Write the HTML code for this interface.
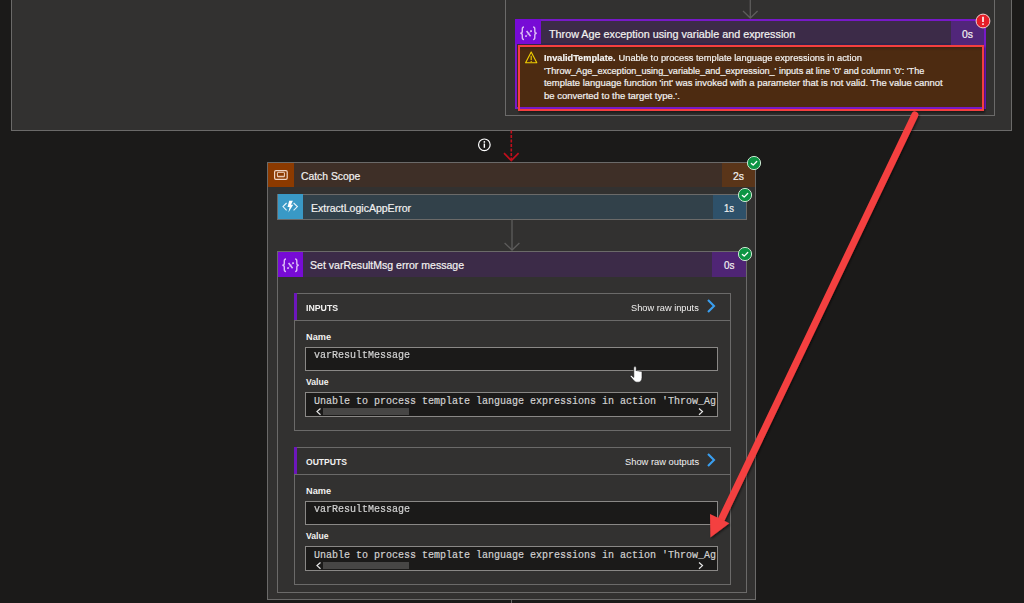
<!DOCTYPE html>
<html><head><meta charset="utf-8">
<style>
*{margin:0;padding:0;box-sizing:border-box}
html,body{width:1024px;height:603px;overflow:hidden;background:#1b1a19;font-family:"Liberation Sans",sans-serif;color:#f3f2f1}
.a{position:absolute}
.box{position:absolute;background:#323130;border:1px solid #6b6a69}
.t{position:absolute;white-space:pre;line-height:1;transform-origin:0 0;-webkit-text-stroke:0.2px currentColor}
.mono{font-family:"Liberation Mono",monospace}
.ibox{position:absolute;background:#1b1a19;border:1px solid #8a8886}
svg{position:absolute;overflow:visible}
</style></head>
<body>
<svg width="0" height="0" style="position:absolute">
<defs>
<g id="varicon">
<path d="M9 7C7.7 7 7.3 7.7 7.3 9V11.3C7.3 12.5 6.6 13.3 5.3 13.3C6.6 13.3 7.3 14.1 7.3 15.3V17.6C7.3 18.9 7.7 19.6 9 19.6M18.1 7C19.4 7 19.8 7.7 19.8 9V11.3C19.8 12.5 20.5 13.3 21.8 13.3C20.5 13.3 19.8 14.1 19.8 15.3V17.6C19.8 18.9 19.4 19.6 18.1 19.6" stroke="#dcbcf6" stroke-width="1.4" fill="none"/>
<path d="M11.6 11.1L15.6 16.2M10.2 16.1H11.8M15.2 11.1H16.9" stroke="#dcbcf6" stroke-width="1.6" fill="none"/>
<path d="M16.3 11.2L11 16" stroke="#dcbcf6" stroke-width="0.5" fill="none" opacity="0.7"/>
</g>
<g id="check">
<circle cx="0" cy="0" r="6.6" fill="#0c9443" stroke="#c8e6d0" stroke-width="1"/>
<path d="M-2.6 0.5L-0.8 2.1L2.7 -1.5" stroke="#fff" stroke-width="1.3" fill="none" stroke-linecap="round" stroke-linejoin="round"/>
</g>
<path id="chev" d="M0 0L6 6L0 12" stroke="#3a9ff0" stroke-width="2.1" fill="none"/>
</defs>
</svg>

<!-- outer scope box -->
<div class="box" style="left:11px;top:-10px;width:1001px;height:141px"></div>
<!-- inner scope box -->
<div class="box" style="left:505px;top:-10px;width:490px;height:126px"></div>
<!-- connector arrow top -->
<svg style="left:735px;top:0" width="30" height="20"><path d="M15.3 0V17.5M8 11l7.3 7 7.3-7" stroke="#5d5c5b" stroke-width="1.3" fill="none"/></svg>

<!-- Throw card -->
<div class="a" style="left:515px;top:19px;width:471px;height:90px;background:#4d2b11;border:2px solid #7719c8"></div>
<div class="a" style="left:517px;top:21px;width:467px;height:24px;background:#3c2b48"></div>
<div class="a" style="left:517px;top:43px;width:467px;height:2px;background:#30264c"></div>
<div class="a" style="left:520px;top:47px;width:462px;height:4px;background:linear-gradient(#3d2310,rgba(77,43,17,0))"></div>
<div class="a" style="left:515px;top:19px;width:26px;height:25px;background:#770bd6"></div>
<svg style="left:515px;top:19.8px" width="26" height="25"><use href="#varicon"/></svg>
<div class="a" style="left:951px;top:21px;width:33px;height:24px;background:#51267a"></div>
<div class="a" style="left:518px;top:45px;width:466px;height:66px;border:2px solid #f43f3f;box-shadow:1px 1.5px 2px rgba(0,0,0,0.45)"></div>
<svg style="left:525px;top:51px" width="13" height="13"><path d="M6.2 1L11.8 11.8H0.6Z" stroke="#f2d000" stroke-width="1.1" fill="none" stroke-linejoin="round"/><path d="M6.2 4.8V9" stroke="#f2d000" stroke-width="1.1"/><circle cx="6.2" cy="10.4" r="0.6" fill="#f2d000"/></svg>
<!-- error badge -->
<svg style="left:982.9px;top:21.1px" width="1" height="1"><circle cx="0" cy="0" r="6.9" fill="#e51e27" stroke="#f4d0d0" stroke-width="1"/><path d="M0 -4.2V1" stroke="#fff" stroke-width="1.6"/><circle cx="0" cy="3.1" r="0.95" fill="#fff"/></svg>

<!-- info icon + dashed red connector -->
<svg style="left:476px;top:136px" width="18" height="18"><circle cx="8.35" cy="8.8" r="5.8" stroke="#fff" stroke-width="1.2" fill="none"/><path d="M8.35 7.5V11.8" stroke="#fff" stroke-width="1.4"/><circle cx="8.35" cy="5.9" r="0.85" fill="#fff"/></svg>
<svg style="left:500px;top:130px" width="24" height="33"><path d="M11.3 0.5V30" stroke="#c00e1c" stroke-width="1.6" stroke-dasharray="3 1.5" fill="none"/><path d="M4 23.2l7.3 7.3 7.3-7.3" stroke="#c00e1c" stroke-width="1.7" fill="none"/></svg>

<!-- Catch scope -->
<div class="box" style="left:267px;top:162px;width:489px;height:438px"></div>
<div class="a" style="left:268px;top:163px;width:487px;height:24px;background:#3e2f27"></div>
<div class="a" style="left:268px;top:163px;width:26px;height:24px;background:#8c3a00"></div>
<svg style="left:268px;top:163px" width="26" height="24"><rect x="6.6" y="7.6" width="12.6" height="8.8" rx="1.3" stroke="#f0d6c6" stroke-width="1.2" fill="none"/><rect x="9.4" y="9.3" width="7" height="4.4" rx="0.6" stroke="#f0d6c6" stroke-width="1" fill="none"/><rect x="9" y="12.6" width="7.8" height="1.6" fill="#f0d6c6" opacity="0.55"/></svg>
<div class="a" style="left:722px;top:163px;width:33px;height:24px;background:#5a3519"></div>

<!-- Extract card -->
<div class="a" style="left:277px;top:194px;width:470px;height:26px;background:#32414a;border:1px solid #6b6a69"></div>
<div class="a" style="left:277.5px;top:194px;width:25.5px;height:25px;background:#3999c6"></div>
<svg style="left:277px;top:194px" width="26" height="25"><path d="M9.6 9L6 12.6L9.6 16.3M16.6 9L20.4 12.6L16.6 16.3" stroke="#e6f3fa" stroke-width="1.1" fill="none"/><path d="M12.2 6.7L15.9 6.7L14 10.7L16.2 10.7L11.4 18.4L12.6 12.9L10.5 12.9Z" fill="#fff"/></svg>
<div class="a" style="left:713px;top:195px;width:33px;height:24px;background:#2e516a"></div>
<svg style="left:500px;top:219px" width="24" height="33"><path d="M12 0.5V31" stroke="#5d5c5b" stroke-width="1.3" fill="none"/><path d="M4.6 24l7.4 7 7.4-7" stroke="#5d5c5b" stroke-width="1.3" fill="none"/></svg>

<!-- Set var card -->
<div class="a" style="left:277px;top:251px;width:470px;height:342px;background:#323130;border:1px solid #6b6a69"></div>
<div class="a" style="left:278px;top:252px;width:468px;height:25px;background:#3c2b48"></div>
<div class="a" style="left:278px;top:252px;width:25px;height:25px;background:#770bd6"></div>
<svg style="left:277px;top:251.5px" width="26" height="25"><use href="#varicon"/></svg>
<div class="a" style="left:712px;top:252px;width:34px;height:25px;background:#4f2575"></div>

<!-- Inputs panel -->
<div class="a" style="left:294px;top:293px;width:437px;height:138px;border:1px solid #6b6a69"></div>
<div class="a" style="left:294px;top:293px;width:3px;height:27px;background:#6c16bb"></div>
<div class="a" style="left:294px;top:320px;width:437px;height:1px;background:#6b6a69"></div>
<svg style="left:708px;top:299.8px" width="8" height="12"><use href="#chev"/></svg>
<div class="ibox" style="left:305px;top:347px;width:413px;height:24px"></div>
<div class="ibox" style="left:305px;top:392px;width:413px;height:25px"></div>
<div class="a" style="left:322.5px;top:407.8px;width:86.5px;height:7px;background:#474645"></div>
<svg style="left:316px;top:408px" width="6" height="8"><path d="M4.5 0.5L1 3.6L4.5 6.8" stroke="#e8e8e8" stroke-width="1.2" fill="none"/></svg>
<svg style="left:698px;top:408px" width="6" height="8"><path d="M1 0.5L4.5 3.6L1 6.8" stroke="#e8e8e8" stroke-width="1.2" fill="none"/></svg>

<!-- Outputs panel -->
<div class="a" style="left:294px;top:447px;width:437px;height:138px;border:1px solid #6b6a69"></div>
<div class="a" style="left:294px;top:447px;width:3px;height:27px;background:#6c16bb"></div>
<div class="a" style="left:294px;top:474px;width:437px;height:1px;background:#6b6a69"></div>
<svg style="left:708px;top:453.8px" width="8" height="12"><use href="#chev"/></svg>
<div class="ibox" style="left:305px;top:501px;width:413px;height:24px"></div>
<div class="ibox" style="left:305px;top:546px;width:413px;height:25px"></div>
<div class="a" style="left:322.5px;top:561.8px;width:86.5px;height:7px;background:#474645"></div>
<svg style="left:316px;top:562px" width="6" height="8"><path d="M4.5 0.5L1 3.6L4.5 6.8" stroke="#e8e8e8" stroke-width="1.2" fill="none"/></svg>
<svg style="left:698px;top:562px" width="6" height="8"><path d="M1 0.5L4.5 3.6L1 6.8" stroke="#e8e8e8" stroke-width="1.2" fill="none"/></svg>

<!-- bottom connector -->
<div class="a" style="left:511px;top:600px;width:1px;height:3px;background:#6b6a69"></div>

<div class="t" style="left:549.20px;top:29px;font-size:11.3px;font-weight:400;transform:translateY(-0.40px) scaleX(0.9542);">Throw Age exception using variable and expression</div>
<div class="t" style="left:962.00px;top:29px;font-size:11.3px;font-weight:400;transform:translateY(-0.40px) scaleX(0.9215);">0s</div>
<div class="t" style="left:544.20px;top:53px;font-size:9.6px;font-weight:700;transform:scaleX(0.9601);">InvalidTemplate.</div>
<div class="t" style="left:615.70px;top:53px;font-size:9.6px;font-weight:400;transform:scaleX(0.9683);"> Unable to process template language expressions in action</div>
<div class="t" style="left:544.20px;top:66px;font-size:9.6px;font-weight:400;transform:translateY(-0.40px) scaleX(0.9494);">&#x27;Throw_Age_exception_using_variable_and_expression_&#x27; inputs at line &#x27;0&#x27; and column &#x27;0&#x27;: &#x27;The</div>
<div class="t" style="left:544.20px;top:78px;font-size:9.6px;font-weight:400;transform:translateY(0.40px) scaleX(0.9802);">template language function &#x27;int&#x27; was invoked with a parameter that is not valid. The value cannot</div>
<div class="t" style="left:544.20px;top:91px;font-size:9.6px;font-weight:400;transform:translateY(-0.40px) scaleX(0.9891);">be converted to the target type.&#x27;.</div>
<div class="t" style="left:301.20px;top:171px;font-size:11.2px;font-weight:400;transform:translateY(-0.10px) scaleX(0.9257);">Catch Scope</div>
<div class="t" style="left:733.00px;top:171px;font-size:11.2px;font-weight:400;transform:translateY(-0.10px) scaleX(0.9300);">2s</div>
<div class="t" style="left:310.80px;top:203px;font-size:11.2px;font-weight:400;transform:translateY(-0.40px) scaleX(0.9405);">ExtractLogicAppError</div>
<div class="t" style="left:724.40px;top:203px;font-size:11.2px;font-weight:400;transform:translateY(-0.40px) scaleX(0.8454);">1s</div>
<div class="t" style="left:310.40px;top:260px;font-size:11.2px;font-weight:400;transform:translateY(-0.20px) scaleX(0.9423);">Set varResultMsg error message</div>
<div class="t" style="left:724.00px;top:260px;font-size:11.2px;font-weight:400;transform:translateY(-0.20px) scaleX(0.8877);">0s</div>
<div class="t" style="left:306.20px;top:304px;font-size:8.8px;font-weight:700;transform:scaleX(0.9949);-webkit-text-stroke:0">INPUTS</div>
<div class="t" style="left:631.10px;top:303px;font-size:9.6px;font-weight:400;transform:scaleX(0.9632);-webkit-text-stroke:0">Show raw inputs</div>
<div class="t" style="left:306.10px;top:333px;font-size:8.8px;font-weight:700;transform:translateY(-0.30px) scaleX(1.0430);-webkit-text-stroke:0">Name</div>
<div class="t mono" style="left:314.00px;top:350px;font-size:10.5px;font-weight:400;transform:scaleX(0.9521);color:#d2d2d2">varResultMessage</div>
<div class="t" style="left:306.10px;top:378px;font-size:8.8px;font-weight:700;transform:translateY(0.20px) scaleX(0.9789);-webkit-text-stroke:0">Value</div>
<div class="t mono" style="left:314.00px;top:396px;font-size:10.5px;font-weight:400;transform:translateY(-0.50px) scaleX(0.9522);color:#d2d2d2">Unable to process template language expressions in action &#x27;Throw_Ag</div>
<div class="t" style="left:306.00px;top:458px;font-size:8.8px;font-weight:700;transform:translateY(-0.20px) scaleX(0.9755);-webkit-text-stroke:0">OUTPUTS</div>
<div class="t" style="left:624.60px;top:457px;font-size:9.6px;font-weight:400;transform:translateY(-0.20px) scaleX(0.9716);-webkit-text-stroke:0">Show raw outputs</div>
<div class="t" style="left:306.10px;top:487px;font-size:8.8px;font-weight:700;transform:translateY(-0.30px) scaleX(1.0430);-webkit-text-stroke:0">Name</div>
<div class="t mono" style="left:314.00px;top:504px;font-size:10.5px;font-weight:400;transform:scaleX(0.9521);color:#d2d2d2">varResultMessage</div>
<div class="t" style="left:306.10px;top:532px;font-size:8.8px;font-weight:700;transform:translateY(0.20px) scaleX(0.9789);-webkit-text-stroke:0">Value</div>
<div class="t mono" style="left:314.00px;top:550px;font-size:10.5px;font-weight:400;transform:translateY(-0.50px) scaleX(0.9522);color:#d2d2d2">Unable to process template language expressions in action &#x27;Throw_Ag</div>

<!-- check badges -->
<svg style="left:753.75px;top:163.3px" width="1" height="1"><use href="#check"/></svg>
<svg style="left:744.6px;top:195px" width="1" height="1"><use href="#check"/></svg>
<svg style="left:744.6px;top:253.5px" width="1" height="1"><use href="#check"/></svg>

<!-- cursor -->
<svg style="left:628px;top:365px" width="16" height="20"><path d="M5.8 2.7C5.8 1.2 8.2 1.2 8.2 2.7V6C8.2 5.3 10 5.3 10 6.2C10 5.6 11.9 5.6 11.9 6.5C11.9 6 14 6 14 7V12.5C14 15.5 12.5 17.2 10.3 17.2H8.8C7.3 17.2 6.5 16.3 5.6 15.3L2.4 11.6C1.8 10.8 2.8 10 3.6 10.6L5.8 12.4Z" fill="#fff" stroke="#1a1a1a" stroke-width="0.6"/></svg>

<!-- red annotation arrow -->
<svg style="left:0;top:0" width="1024" height="603">
<defs><filter id="sh" x="-20%" y="-20%" width="140%" height="140%"><feDropShadow dx="1" dy="1.5" stdDeviation="1.3" flood-color="#000" flood-opacity="0.55"/></filter></defs>
<g filter="url(#sh)">
<path d="M914.8 114.9L721.5 519" stroke="#f43f3f" stroke-width="7" stroke-linecap="round" fill="none"/>
<path d="M710 514L729.4 523.3L710.4 537.6Z" fill="#f43f3f"/>
</g>
</svg>
</body></html>
